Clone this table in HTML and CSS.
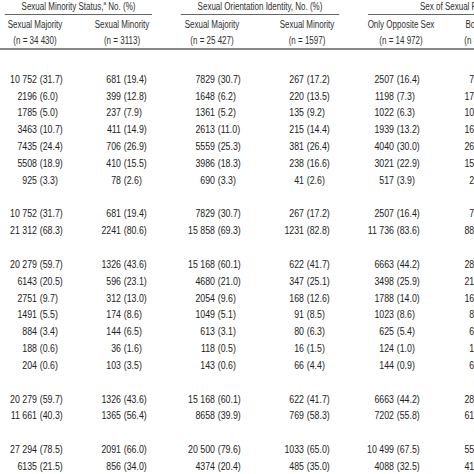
FILE: index.html
```html
<!DOCTYPE html>
<html>
<head>
<meta charset="utf-8">
<link rel="stylesheet" href="styles.css">
</head>
<body>
<div class="sheet">
  <div class="table">
    <div class="row groups">
      <div class="grp g1">Sexual Minority Status,<sup>a</sup> No. (%)</div>
      <div class="grp g2">Sexual Orientation Identity, No. (%)</div>
      <div class="grp g3">Sex of Sexual Partners, No. (%)</div>
    </div>
    <div class="row heads">
      <div>Sexual Majority</div><div>Sexual Minority</div><div>Sexual Majority</div><div>Sexual Minority</div><div>Only Opposite Sex</div><div>Both Sexes</div>
    </div>
    <div class="row heads ns">
      <div>(n = 34&nbsp;430)</div><div>(n = 3113)</div><div>(n = 25&nbsp;427)</div><div>(n = 1597)</div><div>(n = 14&nbsp;972)</div><div>(n = 10&nbsp;483)</div>
    </div>
    <div class="body">
      <div class="row gap"></div>
      <div class="row"><div><span class="n">10&nbsp;752</span><span class="p">(31.7)</span></div><div><span class="n">681</span><span class="p">(19.4)</span></div><div><span class="n">7829</span><span class="p">(30.7)</span></div><div><span class="n">267</span><span class="p">(17.2)</span></div><div><span class="n">2507</span><span class="p">(16.4)</span></div><div><span class="n">746</span><span class="p">(17.6)</span></div></div>
      <div class="row"><div><span class="n">2196</span><span class="p">(6.0)</span></div><div><span class="n">399</span><span class="p">(12.8)</span></div><div><span class="n">1648</span><span class="p">(6.2)</span></div><div><span class="n">220</span><span class="p">(13.5)</span></div><div><span class="n">1198</span><span class="p">(7.3)</span></div><div><span class="n">1714</span><span class="p">(8.3)</span></div></div>
      <div class="row"><div><span class="n">1785</span><span class="p">(5.0)</span></div><div><span class="n">237</span><span class="p">(7.9)</span></div><div><span class="n">1361</span><span class="p">(5.2)</span></div><div><span class="n">135</span><span class="p">(9.2)</span></div><div><span class="n">1022</span><span class="p">(6.3)</span></div><div><span class="n">1064</span><span class="p">(6.8)</span></div></div>
      <div class="row"><div><span class="n">3463</span><span class="p">(10.7)</span></div><div><span class="n">411</span><span class="p">(14.9)</span></div><div><span class="n">2613</span><span class="p">(11.0)</span></div><div><span class="n">215</span><span class="p">(14.4)</span></div><div><span class="n">1939</span><span class="p">(13.2)</span></div><div><span class="n">1646</span><span class="p">(14.2)</span></div></div>
      <div class="row"><div><span class="n">7435</span><span class="p">(24.4)</span></div><div><span class="n">706</span><span class="p">(26.9)</span></div><div><span class="n">5559</span><span class="p">(25.3)</span></div><div><span class="n">381</span><span class="p">(26.4)</span></div><div><span class="n">4040</span><span class="p">(30.0)</span></div><div><span class="n">2640</span><span class="p">(30.1)</span></div></div>
      <div class="row"><div><span class="n">5508</span><span class="p">(18.9)</span></div><div><span class="n">410</span><span class="p">(15.5)</span></div><div><span class="n">3986</span><span class="p">(18.3)</span></div><div><span class="n">238</span><span class="p">(16.6)</span></div><div><span class="n">3021</span><span class="p">(22.9)</span></div><div><span class="n">1542</span><span class="p">(22.0)</span></div></div>
      <div class="row"><div><span class="n">925</span><span class="p">(3.3)</span></div><div><span class="n">78</span><span class="p">(2.6)</span></div><div><span class="n">690</span><span class="p">(3.3)</span></div><div><span class="n">41</span><span class="p">(2.6)</span></div><div><span class="n">517</span><span class="p">(3.9)</span></div><div><span class="n">219</span><span class="p">(4.4)</span></div></div>
      <div class="row gap"></div>
      <div class="row"><div><span class="n">10&nbsp;752</span><span class="p">(31.7)</span></div><div><span class="n">681</span><span class="p">(19.4)</span></div><div><span class="n">7829</span><span class="p">(30.7)</span></div><div><span class="n">267</span><span class="p">(17.2)</span></div><div><span class="n">2507</span><span class="p">(16.4)</span></div><div><span class="n">746</span><span class="p">(17.6)</span></div></div>
      <div class="row"><div><span class="n">21&nbsp;312</span><span class="p">(68.3)</span></div><div><span class="n">2241</span><span class="p">(80.6)</span></div><div><span class="n">15&nbsp;858</span><span class="p">(69.3)</span></div><div><span class="n">1231</span><span class="p">(82.8)</span></div><div><span class="n">11&nbsp;736</span><span class="p">(83.6)</span></div><div><span class="n">8843</span><span class="p">(83.8)</span></div></div>
      <div class="row gap"></div>
      <div class="row"><div><span class="n">20&nbsp;279</span><span class="p">(59.7)</span></div><div><span class="n">1326</span><span class="p">(43.6)</span></div><div><span class="n">15&nbsp;168</span><span class="p">(60.1)</span></div><div><span class="n">622</span><span class="p">(41.7)</span></div><div><span class="n">6663</span><span class="p">(44.2)</span></div><div><span class="n">2843</span><span class="p">(44.9)</span></div></div>
      <div class="row"><div><span class="n">6143</span><span class="p">(20.5)</span></div><div><span class="n">596</span><span class="p">(23.1)</span></div><div><span class="n">4680</span><span class="p">(21.0)</span></div><div><span class="n">347</span><span class="p">(25.1)</span></div><div><span class="n">3498</span><span class="p">(25.9)</span></div><div><span class="n">2154</span><span class="p">(25.1)</span></div></div>
      <div class="row"><div><span class="n">2751</span><span class="p">(9.7)</span></div><div><span class="n">312</span><span class="p">(13.0)</span></div><div><span class="n">2054</span><span class="p">(9.6)</span></div><div><span class="n">168</span><span class="p">(12.6)</span></div><div><span class="n">1788</span><span class="p">(14.0)</span></div><div><span class="n">1640</span><span class="p">(13.6)</span></div></div>
      <div class="row"><div><span class="n">1491</span><span class="p">(5.5)</span></div><div><span class="n">174</span><span class="p">(8.6)</span></div><div><span class="n">1049</span><span class="p">(5.1)</span></div><div><span class="n">91</span><span class="p">(8.5)</span></div><div><span class="n">1023</span><span class="p">(8.6)</span></div><div><span class="n">846</span><span class="p">(8.6)</span></div></div>
      <div class="row"><div><span class="n">884</span><span class="p">(3.4)</span></div><div><span class="n">144</span><span class="p">(6.5)</span></div><div><span class="n">613</span><span class="p">(3.1)</span></div><div><span class="n">80</span><span class="p">(6.3)</span></div><div><span class="n">625</span><span class="p">(5.4)</span></div><div><span class="n">645</span><span class="p">(5.4)</span></div></div>
      <div class="row"><div><span class="n">188</span><span class="p">(0.6)</span></div><div><span class="n">36</span><span class="p">(1.6)</span></div><div><span class="n">118</span><span class="p">(0.5)</span></div><div><span class="n">16</span><span class="p">(1.5)</span></div><div><span class="n">124</span><span class="p">(1.0)</span></div><div><span class="n">128</span><span class="p">(1.0)</span></div></div>
      <div class="row"><div><span class="n">204</span><span class="p">(0.6)</span></div><div><span class="n">103</span><span class="p">(3.5)</span></div><div><span class="n">143</span><span class="p">(0.6)</span></div><div><span class="n">66</span><span class="p">(4.4)</span></div><div><span class="n">144</span><span class="p">(0.9)</span></div><div><span class="n">643</span><span class="p">(0.9)</span></div></div>
      <div class="row gap"></div>
      <div class="row"><div><span class="n">20&nbsp;279</span><span class="p">(59.7)</span></div><div><span class="n">1326</span><span class="p">(43.6)</span></div><div><span class="n">15&nbsp;168</span><span class="p">(60.1)</span></div><div><span class="n">622</span><span class="p">(41.7)</span></div><div><span class="n">6663</span><span class="p">(44.2)</span></div><div><span class="n">2843</span><span class="p">(44.9)</span></div></div>
      <div class="row"><div><span class="n">11&nbsp;661</span><span class="p">(40.3)</span></div><div><span class="n">1365</span><span class="p">(56.4)</span></div><div><span class="n">8658</span><span class="p">(39.9)</span></div><div><span class="n">769</span><span class="p">(58.3)</span></div><div><span class="n">7202</span><span class="p">(55.8)</span></div><div><span class="n">6100</span><span class="p">(55.1)</span></div></div>
      <div class="row gap"></div>
      <div class="row"><div><span class="n">27&nbsp;294</span><span class="p">(78.5)</span></div><div><span class="n">2091</span><span class="p">(66.0)</span></div><div><span class="n">20&nbsp;500</span><span class="p">(79.6)</span></div><div><span class="n">1033</span><span class="p">(65.0)</span></div><div><span class="n">10&nbsp;499</span><span class="p">(67.5)</span></div><div><span class="n">5540</span><span class="p">(67.1)</span></div></div>
      <div class="row"><div><span class="n">6135</span><span class="p">(21.5)</span></div><div><span class="n">856</span><span class="p">(34.0)</span></div><div><span class="n">4374</span><span class="p">(20.4)</span></div><div><span class="n">485</span><span class="p">(35.0)</span></div><div><span class="n">4088</span><span class="p">(32.5)</span></div><div><span class="n">4103</span><span class="p">(32.9)</span></div></div>
    </div>
  </div>
</div>
</body>
</html>
```
FILE: styles.css
```css
html, body {
  margin: 0;
  padding: 0;
  background: #ffffff;
}
.sheet {
  width: 474px;
  height: 474px;
  overflow: hidden;
  font-family: "Liberation Sans", Arial, sans-serif;
  color: #222222;
}
/* condensed face emulated by a horizontal scale; widths below are pre-scale */
.table {
  width: 700px;
  transform: scaleX(0.8);
  transform-origin: 0 0;
}
.row {
  display: grid;
  grid-template-columns: 87.5px 130px 95px 142.5px 92.5px 120px;
  white-space: nowrap;
}
.groups {
  height: 15px;
  font-size: 10px;
  line-height: 14px;
  color: #2e2e2e;
}
.grp {
  text-align: center;
  border-bottom: 1px solid #666666;
}
.grp sup {
  font-size: 6px;
  line-height: 0;
  vertical-align: 5px;
}
.g1 {
  grid-column: 1 / 3;
  margin: 0 27.5px 0 6.25px;
}
.g2 {
  grid-column: 3 / 5;
  margin: 0 31.25px 0 8.75px;
}
.g3 {
  grid-column: 5 / 7;
  margin-left: 5px;
  text-align: left;
  padding-left: 65px;
}
.heads {
  font-size: 10px;
  line-height: 16px;
  color: #2e2e2e;
  text-align: center;
}
.heads:not(.ns) {
  margin-top: 2px;
}
.heads.ns {
  line-height: 15px;
  border-bottom: 2px solid #888888;
}
.body {
  padding-top: 4px;
  font-size: 11px;
}
.body .row {
  height: 16.83px;
  line-height: 16.83px;
}
.body .row > div {
  display: flex;
}
.n {
  flex: none;
  width: var(--r);
  text-align: right;
}
.p {
  margin-left: 3.5px;
}
.body .row > div:nth-child(1) { --r: 46.25px; }
.body .row > div:nth-child(2) { --r: 63.75px; }
.body .row > div:nth-child(3) { --r: 51.25px; }
.body .row > div:nth-child(4) { --r: 67.5px; }
.body .row > div:nth-child(5) { --r: 37.5px; }
.body .row > div:nth-child(6) { --r: 57.5px; }
```
